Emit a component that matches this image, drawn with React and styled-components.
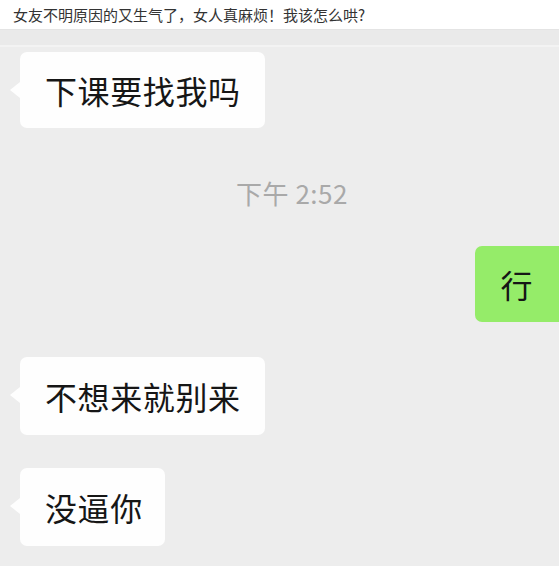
import React from "react";
import styled, { createGlobalStyle } from "styled-components";

const Global = createGlobalStyle`
  html, body { margin: 0; padding: 0; background: #ededed; }
  body { font-family: "Noto Sans CJK SC", "Noto Sans", sans-serif; }
`;

const Page = styled.div`
  width: 559px;
  height: 566px;
  overflow: hidden;
  background: #ededed;
  display: flex;
  flex-direction: column;
`;

const Header = styled.div`
  height: 30px;
  background: #fff;
  border-bottom: 1px solid #e4e4e4;
  box-sizing: border-box;
  padding-left: 13px;
  display: flex;
  align-items: center;
  font-size: 15px;
  color: #333;
`;

const Strip = styled.div`
  height: 15px;
  background: #eaeaea;
  border-bottom: 2px solid #f3f3f3;
`;

const Chat = styled.div`
  display: flex;
  flex-direction: column;
  padding-top: 5px;
`;

const Row = styled.div`
  display: flex;
  justify-content: ${(p) => (p.$mine ? "flex-end" : "flex-start")};
  padding-left: ${(p) => (p.$mine ? "0" : "20px")};
  margin-top: ${(p) => p.$gap || 0}px;
  margin-right: ${(p) => (p.$mine ? "-12px" : "0")};
`;

const Bubble = styled.div`
  position: relative;
  height: ${(p) => p.$h || 76}px;
  box-sizing: border-box;
  padding: 0 ${(p) => (p.$mine ? "38px" : "20px")} 0 25px;
  display: flex;
  align-items: center;
  border-radius: 7px;
  background: ${(p) => (p.$mine ? "#95ec69" : "#fefefe")};
  color: #161616;
  font-size: 32px;
  line-height: 32px;
  letter-spacing: 0.6px;
  white-space: nowrap;
  width: ${(p) => (p.$w ? p.$w + "px" : "auto")};
  &::before {
    content: "";
    position: absolute;
    top: 30px;
    ${(p) => (p.$mine ? "right: -10px;" : "left: -10px;")}
    border-top: 8px solid transparent;
    border-bottom: 8px solid transparent;
    ${(p) =>
      p.$mine
        ? "border-left: 10px solid #95ec69;"
        : "border-right: 10px solid #fefefe;"}
  }
`;

const Time = styled.div`
  text-align: center;
  font-size: 26px;
  line-height: 26px;
  letter-spacing: 0.5px;
  color: #a9a9a9;
  margin-top: 52px;
  padding-left: 25px;
`;

export default function App() {
  return (
    <Page>
      <Global />
      <Header>女友不明原因的又生气了，女人真麻烦！我该怎么哄?</Header>
      <Strip />
      <Chat>
        <Row>
          <Bubble $w={245}>下课要找我吗</Bubble>
        </Row>
        <Time>下午 2:52</Time>
        <Row $mine $gap={40}>
          <Bubble $mine>行</Bubble>
        </Row>
        <Row $gap={35}>
          <Bubble $w={245} $h={78}>不想来就别来</Bubble>
        </Row>
        <Row $gap={33}>
          <Bubble $w={145} $h={78}>没逼你</Bubble>
        </Row>
      </Chat>
    </Page>
  );
}
